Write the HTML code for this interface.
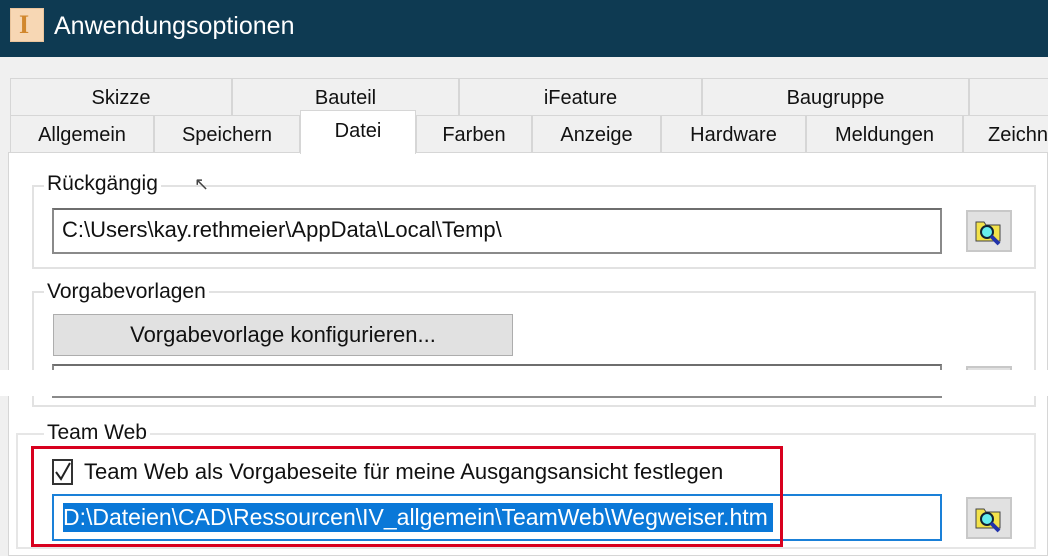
<!DOCTYPE html>
<html><head><style>
*{box-sizing:border-box;margin:0;padding:0}
body{width:1048px;height:556px;overflow:hidden;background:#f0f0f0;font-family:"Liberation Sans",sans-serif;position:relative;color:#111}
.a{position:absolute}
.title{left:0;top:0;width:1048px;height:57px;background:#0e3a52;color:#fff;font-size:25px}
.tab{position:absolute;height:37px;border:1px solid #d6d6d6;border-bottom:none;background:#f0f0f0;font-size:20px;text-align:center;line-height:38px;color:#111}
.grp{position:absolute;border:2px solid #e2e2e2}
.lbl{position:absolute;background:#fff;font-size:21px;padding:0 3px}
.inp{position:absolute;border:2px solid #8a8a8a;border-top-color:#6e6e6e;background:#fff;font-size:22px;line-height:40px;padding-left:8px;white-space:nowrap}
.ib{position:absolute;width:46px;height:42px;background:#e1e1e1;border:2px solid #c8c8c8}
</style></head><body>
<div class="a title">
 <div class="a" style="left:10px;top:8px;width:34px;height:34px;background:#f7d7b4;border:1px solid #e9c49c"><div class="a" style="left:8px;top:4px;width:17px;height:24px;color:#d1872d;font:bold 26px 'Liberation Serif',serif;line-height:24px">I</div></div>
 <div class="a" style="left:54px;top:12px">Anwendungsoptionen</div>
</div>
<div class="a" style="left:8px;top:152px;width:1040px;height:404px;background:#fff;border:1px solid #d6d6d6"></div>
<div class="tab" style="left:10px;top:78px;width:222px">Skizze</div>
<div class="tab" style="left:232px;top:78px;width:227px">Bauteil</div>
<div class="tab" style="left:459px;top:78px;width:243px">iFeature</div>
<div class="tab" style="left:702px;top:78px;width:267px">Baugruppe</div>
<div class="tab" style="left:969px;top:78px;width:90px"></div>
<div class="tab" style="left:10px;top:115px;width:144px">Allgemein</div>
<div class="tab" style="left:154px;top:115px;width:146px">Speichern</div>
<div class="tab" style="left:416px;top:115px;width:116px">Farben</div>
<div class="tab" style="left:532px;top:115px;width:129px">Anzeige</div>
<div class="tab" style="left:661px;top:115px;width:145px">Hardware</div>
<div class="tab" style="left:806px;top:115px;width:157px">Meldungen</div>
<div class="tab" style="left:963px;top:115px;width:100px;text-align:left;padding-left:24px">Zeichn</div>
<div class="tab" style="left:300px;top:110px;width:116px;height:44px;background:#fff;line-height:40px">Datei</div>

<div class="grp" style="left:32px;top:185px;width:1004px;height:84px"></div>
<div class="lbl" style="left:44px;top:172px">Rückgängig</div>
<div class="a" style="left:194px;top:174px;font-size:18px;color:#444">&#8598;</div>
<div class="inp" style="left:52px;top:208px;width:890px;height:46px">C:\Users\kay.rethmeier\AppData\Local\Temp\</div>
<div class="ib" style="left:966px;top:210px"><svg width="42" height="38" viewBox="0 0 42 38"><path d="M8 10h8l2 3h14v16H8z" fill="#f2e24a" stroke="#444"/><circle cx="19" cy="20" r="6" fill="#6ee" stroke="#123" stroke-width="2"/><path d="M23 24l8 8" stroke="#23a" stroke-width="4"/></svg></div>

<div class="grp" style="left:32px;top:291px;width:1004px;height:116px"></div>
<div class="lbl" style="left:44px;top:280px">Vorgabevorlagen</div>
<div class="a" style="left:53px;top:314px;width:460px;height:42px;background:#e1e1e1;border:1px solid #adadad;font-size:22px;text-align:center;line-height:40px">Vorgabevorlage konfigurieren...</div>
<div class="inp" style="left:52px;top:364px;width:890px;height:34px"></div>
<div class="ib" style="left:966px;top:366px;height:30px"></div>
<div class="a" style="left:0;top:370px;width:1048px;height:26px;background:#fff"></div>

<div class="grp" style="left:16px;top:433px;width:1020px;height:116px;border-color:#e6e6e6"></div>
<div class="lbl" style="left:44px;top:421px;background:#fff">Team Web</div>
<div class="a" style="left:52px;top:459px;width:21px;height:26px;border:2px solid #333;background:#fff"><svg width="17" height="22"><path d="M2 11l5 7 9-16" fill="none" stroke="#222" stroke-width="2"/></svg></div>
<div class="a" style="left:84px;top:459px;font-size:22px;white-space:nowrap">Team Web als Vorgabeseite für meine Ausgangsansicht festlegen</div>
<div class="inp" style="left:52px;top:494px;width:890px;height:47px;border-color:#1a80d8"></div>
<div class="a" style="left:63px;top:503px;width:710px;height:29px;background:#0a78d8;color:#fff;font-size:23px;line-height:28px;white-space:nowrap;overflow:hidden">D:\Dateien\CAD\Ressourcen\IV_allgemein\TeamWeb\Wegweiser.htm</div>
<div class="ib" style="left:966px;top:497px"><svg width="42" height="38" viewBox="0 0 42 38"><path d="M8 10h8l2 3h14v16H8z" fill="#f2e24a" stroke="#444"/><circle cx="19" cy="20" r="6" fill="#6ee" stroke="#123" stroke-width="2"/><path d="M23 24l8 8" stroke="#23a" stroke-width="4"/></svg></div>
<div class="a" style="left:31px;top:446px;width:752px;height:101px;border:3px solid #d8001e"></div>
</body></html>
